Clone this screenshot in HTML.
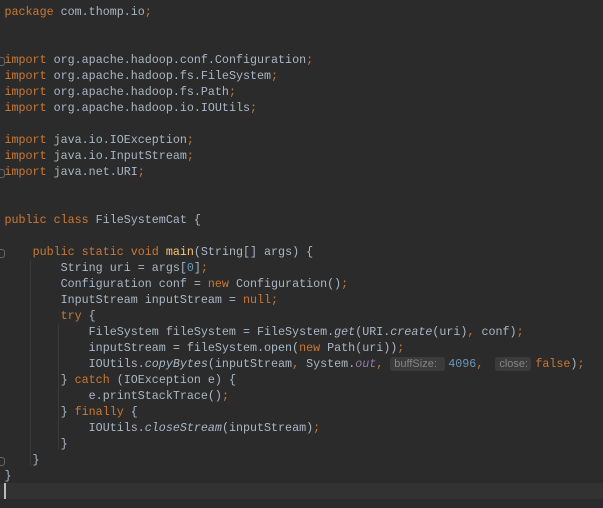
<!DOCTYPE html>
<html><head><style>
body{margin:0;width:603px;height:508px;background:#2b2b2b;overflow:hidden;position:relative;font-family:"Liberation Mono",monospace;}
.cur{position:absolute;left:0;top:483px;width:603px;height:16px;background:#323232;}
.caret{position:absolute;left:4px;top:483px;width:2px;height:16px;background:#bbb;}
.g{position:absolute;width:1px;background:#3a3a3a;}
pre{position:absolute;left:4.5px;top:4px;margin:0;font-family:"Liberation Mono",monospace;font-size:11.7px;line-height:16px;color:#a9b7c6;}
.k{color:#cc7832}.m{color:#ffc66d}.n{color:#6897bb}.f{color:#9876aa;font-style:italic}.i{font-style:italic}
.h{display:inline-block;font-family:"Liberation Sans",sans-serif;font-size:11px;line-height:14px;color:#858585;background:#3b3b3b;border-radius:3px;padding:0 4px;margin:0 3px 0 7px;}
.h1{width:47px}.h2{width:28px;margin-left:12px;margin-right:4px}
.fold{position:absolute;left:0;width:4px;height:7px;border:1px solid #666;border-left:none;border-radius:0 3px 3px 0;}
</style></head><body>
<div class="cur"></div>
<div class="caret"></div>
<div class="g" style="left:30px;top:260px;height:206px"></div>
<div class="g" style="left:58px;top:324px;height:126px"></div>
<div class="fold" style="top:57px"></div>
<div class="fold" style="top:169px"></div>
<div class="fold" style="top:249px"></div>
<div class="fold" style="top:457px"></div>
<pre><span class="k">package</span> com.thomp.io<span class="k">;</span>


<span class="k">import</span> org.apache.hadoop.conf.Configuration<span class="k">;</span>
<span class="k">import</span> org.apache.hadoop.fs.FileSystem<span class="k">;</span>
<span class="k">import</span> org.apache.hadoop.fs.Path<span class="k">;</span>
<span class="k">import</span> org.apache.hadoop.io.IOUtils<span class="k">;</span>

<span class="k">import</span> java.io.IOException<span class="k">;</span>
<span class="k">import</span> java.io.InputStream<span class="k">;</span>
<span class="k">import</span> java.net.URI<span class="k">;</span>


<span class="k">public class</span> FileSystemCat {

    <span class="k">public static void</span> <span class="m">main</span>(String[] args) {
        String uri = args[<span class="n">0</span>]<span class="k">;</span>
        Configuration conf = <span class="k">new</span> Configuration()<span class="k">;</span>
        InputStream inputStream = <span class="k">null;</span>
        <span class="k">try</span> {
            FileSystem fileSystem = FileSystem.<span class="i">get</span>(URI.<span class="i">create</span>(uri)<span class="k">,</span> conf)<span class="k">;</span>
            inputStream = fileSystem.open(<span class="k">new</span> Path(uri))<span class="k">;</span>
            IOUtils.<span class="i">copyBytes</span>(inputStream<span class="k">,</span> System.<span class="f">out</span><span class="k">,</span><span class="h h1">buffSize:</span><span class="n">4096</span><span class="k">,</span><span class="h h2">close:</span><span class="k">false</span>)<span class="k">;</span>
        } <span class="k">catch</span> (IOException e) {
            e.printStackTrace()<span class="k">;</span>
        } <span class="k">finally</span> {
            IOUtils.<span class="i">closeStream</span>(inputStream)<span class="k">;</span>
        }
    }
}
</pre>
</body></html>
